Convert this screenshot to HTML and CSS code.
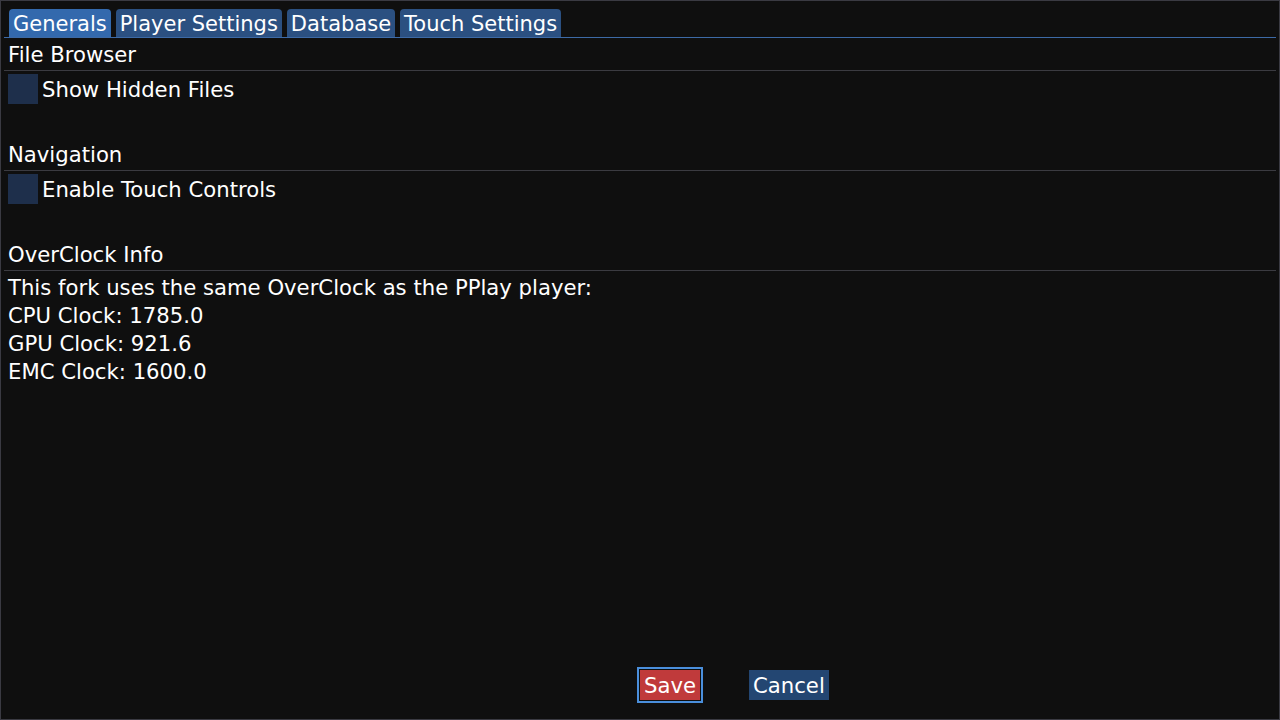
FILE: index.html
```html
<!DOCTYPE html>
<html>
<head>
<meta charset="utf-8">
<link rel="stylesheet" href="styles.css">
</head>
<body>
<div class="window">
  <div class="tabbar">
    <div class="tab active">Generals</div>
    <div class="tab">Player Settings</div>
    <div class="tab">Database</div>
    <div class="tab">Touch Settings</div>
  </div>
  <section class="group">
    <div class="header">File Browser</div>
    <div class="sep"></div>
    <div class="check"><span class="box"></span><span class="label">Show Hidden Files</span></div>
  </section>
  <section class="group">
    <div class="header">Navigation</div>
    <div class="sep"></div>
    <div class="check"><span class="box"></span><span class="label">Enable Touch Controls</span></div>
  </section>
  <section class="group">
    <div class="header">OverClock Info</div>
    <div class="sep"></div>
    <div class="lines">
      <div class="line">This fork uses the same OverClock as the PPlay player:</div>
      <div class="line">CPU Clock: 1785.0</div>
      <div class="line">GPU Clock: 921.6</div>
      <div class="line">EMC Clock: 1600.0</div>
    </div>
  </section>
  <div class="footer">
    <div class="btn save">Save</div>
    <div class="btn cancel">Cancel</div>
  </div>
</div>
</body>
</html>
```
FILE: styles.css
```css
html, body {
  margin: 0;
  padding: 0;
  background: #0f0f0f;
}
body {
  font-family: "DejaVu Sans", sans-serif;
  font-size: 21.2px;
  line-height: 26px;
  color: #ffffff;
}
.window {
  width: 1280px;
  height: 720px;
  box-sizing: border-box;
  border: 1px solid #3a3a42;
  background: #0f0f0f;
  padding: 8px 3px 19px 3px;
  display: flex;
  flex-direction: column;
}
.tabbar {
  display: flex;
  gap: 5px;
  padding-left: 5px;
  border-bottom: 1px solid #3d6aa6;
}
.tab {
  height: 28px;
  font-size: 21px;
  line-height: 30px;
  padding: 0 4px;
  background: #2b5081;
  border-radius: 4px 4px 0 0;
  overflow: hidden;
}
.tab.active {
  background: #3369ad;
}
.group {
  display: flex;
  flex-direction: column;
}
.header {
  padding-left: 4px;
  margin-top: 4px;
}
.group + .group .header {
  margin-top: 38px;
}
.sep {
  height: 1px;
  background: #3b3b41;
  margin-top: 2px;
}
.check {
  display: flex;
  align-items: center;
  gap: 4px;
  margin-top: 3px;
  padding-left: 4px;
  height: 30px;
}
.label {
  line-height: 28px;
  padding-top: 2px;
}
.box {
  width: 30px;
  height: 30px;
  background: #1e2f4b;
}
.lines {
  display: flex;
  flex-direction: column;
  gap: 2px;
  margin-top: 4px;
  padding-left: 4px;
}
.footer {
  margin-top: auto;
  display: flex;
  padding-left: 636px;
  gap: 49px;
}
.btn {
  height: 30px;
  line-height: 32px;
  padding: 0 4px;
  overflow: hidden;
}
.save {
  background: #c03a3b;
  outline: 2px solid #4a8fdc;
  outline-offset: 1px;
}
.cancel {
  background: #234672;
}
```
